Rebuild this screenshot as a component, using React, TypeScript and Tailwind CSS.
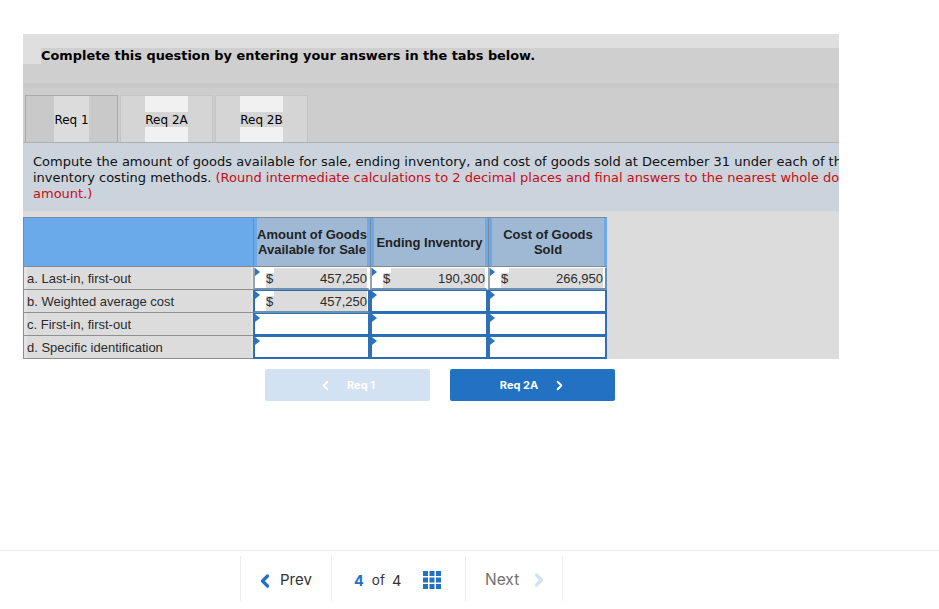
import { ChevronLeft, ChevronRight } from 'lucide-react';

const rows = [
  { label: 'a. Last-in, first-out', values: ['457,250', '190,300', '266,950'] },
  { label: 'b. Weighted average cost', values: ['457,250', '', ''] },
  { label: 'c. First-in, first-out', values: ['', '', ''] },
  { label: 'd. Specific identification', values: ['', '', ''] },
];

function Arrow() {
  return <span className="absolute left-0 top-0 h-0 w-0 border-y-[4px] border-l-[5px] border-y-transparent border-l-[#2a74c4]" />;
}

function AmountCell({ value, firstRow, last }: { value: string; firstRow: boolean; last: boolean }) {
  return (
    <div
      className={`relative flex min-w-0 border-b-2 border-x-2 border-t ${
        firstRow ? `border-l-[#9aa3ad] ${last ? 'border-r-[#5f8fc4]' : 'border-r-white'}` : 'border-x-[#2f6fb3]'
      } ${value ? 'border-b-[#6f8fb3]' : 'border-b-[#2a6db5]'} ${
        firstRow ? 'border-t-white' : 'border-t-[#2f6fb3]'
      } bg-white`}
    >
      {value && (
        <>
          <div className="w-[11px] shrink-0 bg-white" />
          <div className={`flex flex-1 items-center justify-between bg-[#dcdcdc] pt-[1px] text-[13px] text-[#2b2b2b] ${last ? 'mr-[2px]' : 'mr-[1px]'}`}>
            <span>$</span>
            <span>{value}</span>
          </div>
          <div className="absolute left-0 top-0 h-[5px] w-[19px] bg-white" />
        </>
      )}
      <Arrow />
    </div>
  );
}

function HeaderCell({ lines }: { lines: string[] }) {
  return (
    <div className="flex border-l border-[#7d8a99] bg-[#6aa9ea]">
      <div className="ml-[3px] mr-[3px] flex flex-1 flex-col items-center justify-center bg-[#9fb9d5] text-[13px] leading-[15px] font-bold text-[#222222]">
        {lines.map((line) => (
          <span key={line} className="whitespace-nowrap">{line}</span>
        ))}
      </div>
    </div>
  );
}

export default function App() {
  return (
    <div className="flex h-[609px] w-[939px] flex-col overflow-hidden bg-white font-['DejaVu_Sans',sans-serif] text-black">
      <div className="ml-[23px] mt-[34px] w-[816px] overflow-hidden bg-[#dcdcdc]">
        <div className="h-[14px] bg-[#dfdfdf]" />
        <div className="h-[35px] bg-[#cfcfcf]">
          <div className="flex h-[16px] items-center">
            <div className="h-full w-[18px] bg-[#dfdfdf]" />
            <h1 className="whitespace-nowrap text-[12.9px] leading-[16px] font-bold">
              Complete this question by entering your answers in the tabs below.
            </h1>
          </div>
        </div>
        <div className="h-[5px] bg-[#c9c9c9]" />

        <div className="flex h-[55px] items-end gap-[2px] border-b border-[#aeaeae] bg-[#cdcdcd] pl-[2px]">
          <div className="flex h-[47px] w-[93px] justify-center border-x border-t border-[#a9a9a9] bg-[#c9c9c9]">
            <div className="flex w-[35px] items-center justify-center whitespace-nowrap bg-[#dcdcdc] pt-[1px] text-[12px]">Req 1</div>
          </div>
          {['Req 2A', 'Req 2B'].map((tab) => (
            <div key={tab} className="flex h-[47px] w-[93px] justify-center border-x border-t border-[#c4c4c4] bg-[#d5d5d5]">
              <div className="flex w-[43px] flex-col bg-[#f1f1f1]">
                <div className="flex-1" />
                <div className="flex h-[15px] items-center justify-center whitespace-nowrap bg-[#d5d5d5] pt-[1px] text-[12px]">{tab}</div>
                <div className="flex-1" />
              </div>
            </div>
          ))}
        </div>

        <div className="h-[68px] whitespace-nowrap bg-[#cbd3dc] pl-[10px] pt-[11px] text-[13px] leading-[16px] text-[#111111]">
          <div>Compute the amount of goods available for sale, ending inventory, and cost of goods sold at December 31 under each of the</div>
          <div>
            inventory costing methods.{' '}
            <span className="text-[#c90d14]">(Round intermediate calculations to 2 decimal places and final answers to the nearest whole dollar</span>
          </div>
          <div className="text-[#c90d14]">amount.)</div>
        </div>

        <div className="pt-[6px] font-['Liberation_Sans',sans-serif]">
          <div className="grid w-[584px] grid-cols-[230px_117px_118px_119px] grid-rows-[50px_23px_23px_23px_23px] border-r border-[#7d8a99]">
            <div className="border-l border-t border-b border-[#7d8a99] bg-[#6aa9ea]" />
            <div className="grid border-y border-[#7d8a99]"><HeaderCell lines={['Amount of Goods', 'Available for Sale']} /></div>
            <div className="grid border-y border-[#7d8a99]"><HeaderCell lines={['Ending Inventory']} /></div>
            <div className="grid border-y border-[#7d8a99]"><HeaderCell lines={['Cost of Goods', 'Sold']} /></div>
            {rows.map((row, r) => (
              <div key={row.label} className="contents">
                <div className="border-b border-l border-[#8f8f8f] bg-[#e4e4e4] pl-[3px] pr-[2px]">
                  <div className="flex h-full items-center bg-[#dcdcdc] pt-[1px] text-[13px] text-[#2b2b2b]">{row.label}</div>
                </div>
                {row.values.map((value, i) => (
                  <AmountCell key={i} value={value} firstRow={r === 0} last={i === 2} />
                ))}
              </div>
            ))}
          </div>
        </div>
      </div>

      <div className="ml-[265px] mt-[10px] flex gap-[20px] font-['Inter',sans-serif] text-[11px] font-bold text-white">
        <div className="flex h-8 w-[165px] items-center justify-center gap-[14px] rounded-[2px] bg-[#d3e2f3] pr-[2px]">
          <ChevronLeft size={15} strokeWidth={3} />
          <span>Req 1</span>
        </div>
        <div className="flex h-8 w-[165px] items-center justify-center gap-[14px] rounded-[2px] bg-[#2371c2] pl-[2px]">
          <span>Req 2A</span>
          <ChevronRight size={15} strokeWidth={3} />
        </div>
      </div>

      <div className="mt-[149px] border-t border-[#eeeeee] pt-[5px] font-['Inter',sans-serif]">
        <div className="ml-[240px] flex h-[45px] w-[323px] items-center border-x border-[#eeeeee]">
          <div className="flex h-full w-[91px] items-center gap-[5px] border-r border-[#eeeeee] pl-[14px] pt-[4px] text-[15px] text-[#333333]">
            <ChevronLeft size={20} strokeWidth={4} className="text-[#2371c2]" />
            <span>Prev</span>
          </div>
          <div className="flex h-full w-[134px] items-center border-r border-[#eeeeee] pl-[22px] pt-[4px] text-[14.5px] text-[#333333]">
            <span className="font-bold text-[#2371c2]">4</span>
            <span className="ml-[8px] text-[13.5px]">of</span>
            <span className="ml-[7px]">4</span>
            <svg className="mb-[2px] ml-[22px]" width="18" height="18" viewBox="0 0 18 18" fill="#2371c2">
              {[0, 6.5, 13].map((y) =>
                [0, 6.5, 13].map((x) => <rect key={`${x}-${y}`} x={x} y={y} width="5" height="5" />),
              )}
            </svg>
          </div>
          <div className="flex h-full items-center gap-[10px] pl-[19px] pt-[2px] text-[15.5px] text-[#707070]">
            <span>Next</span>
            <ChevronRight size={20} strokeWidth={4} className="text-[#d3e2f3]" />
          </div>
        </div>
      </div>
    </div>
  );
}
